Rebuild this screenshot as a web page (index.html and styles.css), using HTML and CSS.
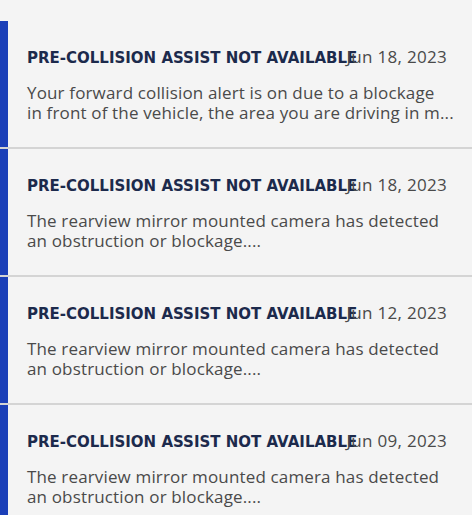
FILE: index.html
```html
<!DOCTYPE html>
<html lang="en">
<head>
    <meta charset="UTF-8">
    <meta name="viewport" content="width=device-width, initial-scale=1.0">
    <title>Messages</title>
    <link rel="stylesheet" href="styles.css">
</head>
<body>

    <div class="list">

        <!-- Message 1 -->
        <div class="item">
            <div class="bar"></div>
            <div class="content">
                <div class="head">
                    <h3 class="title">Pre-Collision Assist Not Available</h3>
                    <span class="date">Jun 18, 2023</span>
                </div>
                <p class="text">Your forward collision alert is on due to a blockage<br>in front of the vehicle, the area you are driving in m...</p>
            </div>
        </div>

        <!-- Message 2 -->
        <div class="item">
            <div class="bar"></div>
            <div class="content">
                <div class="head">
                    <h3 class="title">Pre-Collision Assist Not Available</h3>
                    <span class="date">Jun 18, 2023</span>
                </div>
                <p class="text">The rearview mirror mounted camera has detected<br>an obstruction or blockage....</p>
            </div>
        </div>

        <!-- Message 3 -->
        <div class="item">
            <div class="bar"></div>
            <div class="content">
                <div class="head">
                    <h3 class="title">Pre-Collision Assist Not Available</h3>
                    <span class="date">Jun 12, 2023</span>
                </div>
                <p class="text">The rearview mirror mounted camera has detected<br>an obstruction or blockage....</p>
            </div>
        </div>

        <!-- Message 4 -->
        <div class="item">
            <div class="bar"></div>
            <div class="content">
                <div class="head">
                    <h3 class="title">Pre-Collision Assist Not Available</h3>
                    <span class="date">Jun 09, 2023</span>
                </div>
                <p class="text">The rearview mirror mounted camera has detected<br>an obstruction or blockage....</p>
            </div>
        </div>

    </div>

</body>
</html>
```

FILE: styles.css
```css
body {
    font-family: "Open Sans", sans-serif;
    background: #f4f4f4;
    margin: 0;
    padding: 0;
}
.list {
    padding-top: 21px;
    border-right: 2px solid #ffffff;
}
.item {
    display: flex;
    border-bottom: 2px solid #d4d4d4;
}
.bar {
    width: 8px;
    flex: none;
    background: #1b3fb8;
}
.content {
    flex: 1;
    min-width: 0;
    padding: 26px 25px 24px 19px;
}
.head {
    display: flex;
    align-items: baseline;
    height: 20px;
}
.title {
    flex: 1;
    min-width: 0;
    margin: 0;
    white-space: nowrap;
    font-family: "DejaVu Sans", sans-serif;
    font-size: 15px;
    font-weight: bold;
    line-height: 20px;
    text-transform: uppercase;
    color: #1c2a4c;
}
.date {
    flex: none;
    font-size: 17px;
    line-height: 20px;
    letter-spacing: 0.3px;
    color: #4a4a4a;
}
.text {
    margin: 16px 0 0;
    white-space: nowrap;
    font-size: 17px;
    line-height: 20px;
    letter-spacing: 0.15px;
    color: #4a4a4a;
}
```
